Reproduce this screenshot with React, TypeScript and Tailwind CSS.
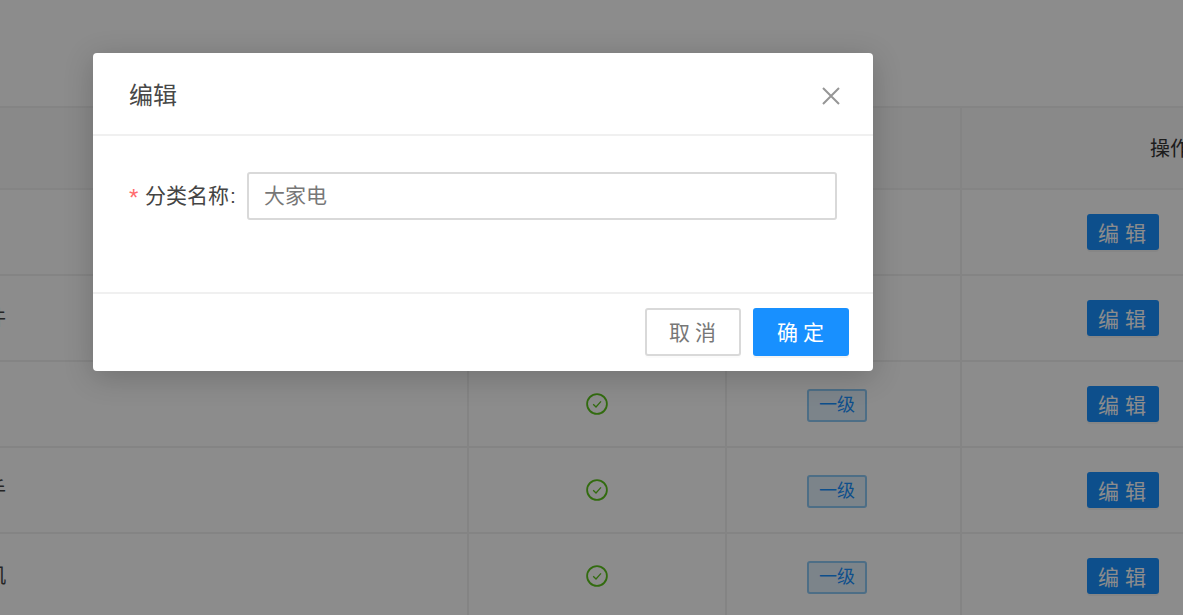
const cjk = "font-['Liberation_Sans','Noto_Sans_CJK_SC',sans-serif]";

const rows = [
  { name: "大家电", pad: "pr-[490px]" },
  { name: "手机配件", pad: "pr-[461px]" },
  { name: "电脑办公", pad: "pr-[490px]" },
  { name: "生活助手", pad: "pr-[461px]" },
  { name: "智能手机", pad: "pr-[461px]" },
];

function CheckCircle() {
  return (
    <svg width="22" height="22" viewBox="0 0 22 22" fill="none" stroke="#5cc41c">
      <circle cx="11" cy="11" r="9.9" strokeWidth="1.8" />
      <path d="M7.2 11.2l2.8 2.8 5-5.6" strokeWidth="1.3" />
    </svg>
  );
}

export default function App() {
  return (
    <div className={`relative h-[615px] w-[1183px] overflow-hidden bg-white ${cjk}`}>
      <div className="pt-[106px]">
        <div className="ml-[-500px] w-[1800px] border-t-2 border-[#f0f0f0]">
          <div className="flex h-[82px] border-b-2 border-[#f0f0f0] bg-[#fafafa]">
            <div className="w-[969px] border-r-2 border-[#f0f0f0]" />
            <div className="w-[258px] border-r-2 border-[#f0f0f0]" />
            <div className="w-[235px] border-r-2 border-[#f0f0f0]" />
            <div className="flex-1 pl-[188px] pt-[26px] text-[20px] text-[#333]">操作</div>
          </div>
          {rows.map((row) => (
            <div key={row.name} className="flex h-[86px] border-b-2 border-[#f0f0f0]">
              <div className={`flex w-[969px] items-center justify-end border-r-2 border-[#f0f0f0] text-[20px] text-[#444] ${row.pad}`}>
                {row.name}
              </div>
              <div className="flex w-[258px] items-center justify-center border-r-2 border-[#f0f0f0]">
                <CheckCircle />
              </div>
              <div className="flex w-[235px] items-center justify-start border-r-2 border-[#f0f0f0] pl-[80px]">
                <span className="mt-[2px] flex h-[33px] w-[60px] items-center justify-center rounded-[3px] border-2 border-[#8cc8f5] bg-[#e2f0fb] pt-[1px] text-[18px] text-[#1890ff]">
                  一级
                </span>
              </div>
              <div className="flex-1 pl-[125px] pt-[24px]">
                <span className="flex h-[36px] w-[72px] items-center justify-center rounded-[3px] bg-[#1890ff] pl-[4px] pt-[3px] text-[21px] tracking-[6px] text-white shadow-[0_2px_0_rgba(0,0,0,0.04)]">
                  编辑
                </span>
              </div>
            </div>
          ))}
        </div>
      </div>

      <div className="absolute inset-0 bg-black/45" />

      <div className="absolute left-[93px] top-[53px] w-[780px] rounded-[4px] bg-white shadow-[0_6px_30px_rgba(0,0,0,0.2)]">
        <div className="flex h-[83px] items-center justify-between border-b-2 border-[#f0f0f0] px-[36px] pt-[5px]">
          <span className="text-[24px] text-[#484848]">编辑</span>
          <svg width="18" height="18" viewBox="0 0 18 18" stroke="#969696" strokeWidth="2" className="mr-[-3px]">
            <path d="M1 1l16 16M17 1L1 17" />
          </svg>
        </div>
        <div className="flex h-[156px] items-start px-[36px] pt-[36px]">
          <div className="flex h-[48px] w-[118px] items-center whitespace-nowrap text-[21px] text-[#444]">
            <span className="mr-[6px] w-[10px] pt-[4px] text-[24px] text-[#ff6b6d]">*</span>
            分类名称<span className="ml-[1px]">:</span>
          </div>
          <div className="flex h-[48px] w-[590px] items-center rounded-[3px] border-2 border-[#d9d9d9] px-[15px] text-[21px] text-[#777]">
            大家电
          </div>
        </div>
        <div className="flex h-[79px] items-start justify-end gap-[12px] border-t-2 border-[#f0f0f0] pr-[24px] pt-[14px]">
          <span className="flex h-[48px] w-[96px] items-center justify-center rounded-[3px] border-2 border-[#d9d9d9] pl-[4px] pt-[2px] text-[21px] tracking-[5px] text-[#777] shadow-[0_2px_0_rgba(0,0,0,0.015)]">
            取消
          </span>
          <span className="flex h-[48px] w-[96px] items-center justify-center rounded-[3px] bg-[#1890ff] pl-[4px] pt-[2px] text-[21px] tracking-[5px] text-white shadow-[0_2px_0_rgba(0,0,0,0.045)]">
            确定
          </span>
        </div>
      </div>
    </div>
  );
}
